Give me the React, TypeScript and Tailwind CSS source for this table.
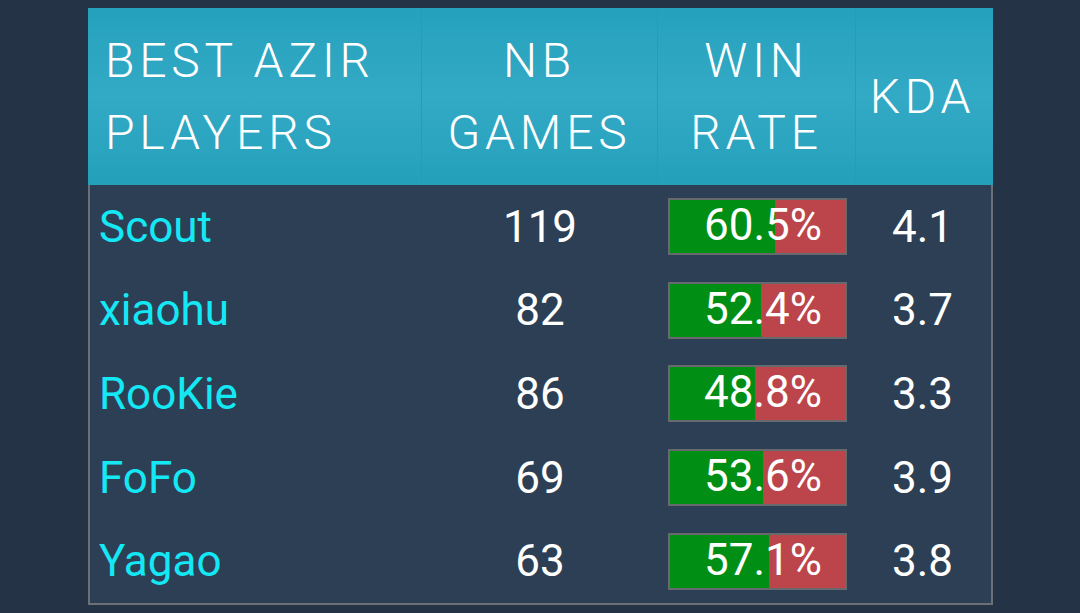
import React from "react";

const rows = [
  { name: "Scout", games: 119, wr: 60.5, kda: "4.1" },
  { name: "xiaohu", games: 82, wr: 52.4, kda: "3.7" },
  { name: "RooKie", games: 86, wr: 48.8, kda: "3.3" },
  { name: "FoFo", games: 69, wr: 53.6, kda: "3.9" },
  { name: "Yagao", games: 63, wr: 57.1, kda: "3.8" },
];

export default function App() {
  return (
    <div
      className="w-[1080px] h-[613px] bg-[#243345] pt-[8px] pl-[88px]"
      style={{ fontFamily: "Roboto, 'Liberation Sans', sans-serif" }}
    >
      <div className="w-[905px]">
        <div className="grid grid-cols-[334px_236px_198px_137px] h-[177px] bg-gradient-to-b from-[#25a1bd] via-[#33aac5] to-[#24a0bb] text-white font-light text-[48px] leading-[72px] tracking-[0.1em]">
          <div className="flex items-center pl-[17px] border-r border-[#2b9bb5]">
            <div>BEST AZIR<br />PLAYERS</div>
          </div>
          <div className="flex items-center justify-center text-center border-r border-[#2b9bb5]">
            <div>NB<br />GAMES</div>
          </div>
          <div className="flex items-center justify-center text-center border-r border-[#2b9bb5]">
            <div>WIN<br />RATE</div>
          </div>
          <div className="flex items-center justify-center text-center pr-[4px]">
            <div>KDA</div>
          </div>
        </div>
        <div className="bg-[#2d3f54] border-l-2 border-r-2 border-b-2 border-[#6a7076] h-[420px] flex flex-col text-[44px] text-white">
          {rows.map((r) => (
            <div key={r.name} className="grid grid-cols-[332px_236px_198px_135px] h-[83.6px] items-center">
              <div className="pl-[9px] text-[#14e8f5] leading-none">{r.name}</div>
              <div className="text-center leading-none">{r.games}</div>
              <div className="flex justify-center">
                <div className="relative w-[179px] h-[57px] border-2 border-[#666a6e] bg-[#bb454b] flex">
                  <div className="h-full bg-[#008f14]" style={{ width: `${r.wr}%` }} />
                  <div className="absolute inset-0 flex items-center justify-center leading-none pb-[3px] pl-[12px]">
                    {r.wr.toFixed(1)}%
                  </div>
                </div>
              </div>
              <div className="text-center leading-none pr-[2px]">{r.kda}</div>
            </div>
          ))}
        </div>
      </div>
    </div>
  );
}
